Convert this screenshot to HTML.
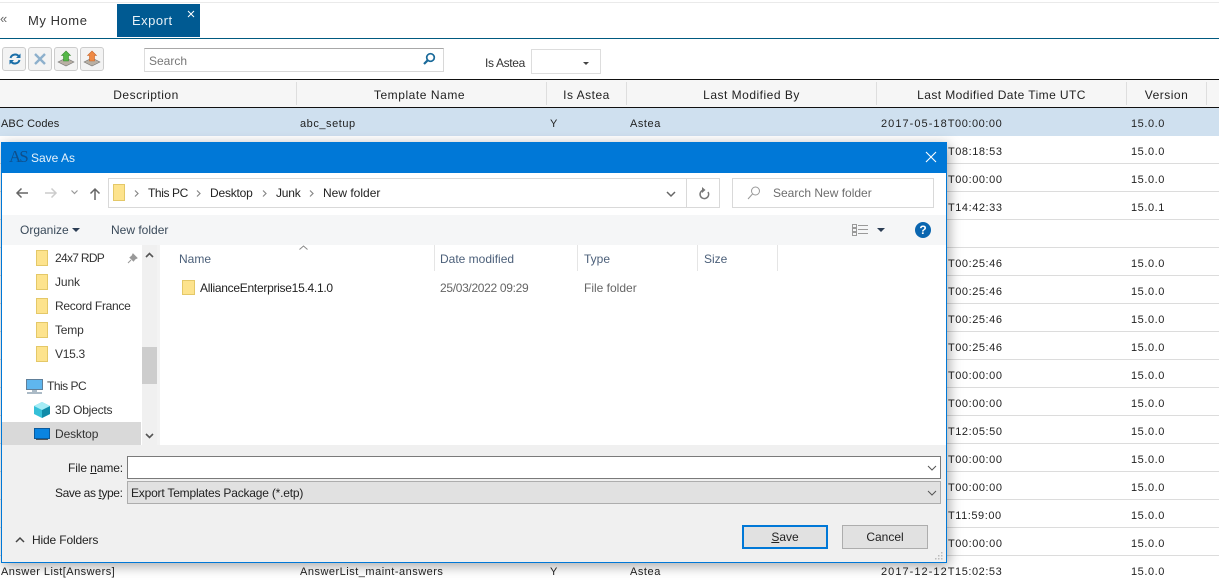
<!DOCTYPE html>
<html><head><meta charset="utf-8"><style>
html,body{margin:0;padding:0;background:#fff}
body{width:1219px;height:574px;position:relative;overflow:hidden;font-family:"Liberation Sans","Noto Sans CJK JP",sans-serif;font-size:12px;color:#222}
.a{position:absolute}
.t{position:absolute;white-space:nowrap;line-height:16px;height:16px}
.g{font-size:11px;letter-spacing:.55px;color:#222}
.w{letter-spacing:1.05px}
.h{font-size:12px;letter-spacing:.5px;color:#222;text-align:center}
.l{position:absolute;left:0;width:1219px;height:1px;background:#dcdcdc}
.v{position:absolute;width:1px;background:#dedede}
.b{position:absolute;top:47px;width:24px;height:24px;border:1px solid #ccc;border-radius:3px;background:#f3f3f3;box-sizing:border-box}
.d{font-size:12px;color:#222}
.n{font-size:12px;color:#333;letter-spacing:-.3px}
svg{position:absolute;overflow:visible}
u{text-decoration:underline}
</style></head><body>
<div class="a" style="left:0;top:2px;width:1219px;height:1px;background:#eaeaea"></div>
<div class="t" style="left:0;top:11px;font-size:13px;color:#666">«</div>
<div class="t" style="left:28px;top:13px;font-size:13px;color:#333;letter-spacing:.55px">My Home</div>
<div class="a" style="left:117px;top:4px;width:83px;height:33px;background:#005a92"></div>
<div class="t" style="left:132px;top:13px;font-size:13px;color:#e8f2f8;letter-spacing:.5px">Export</div>
<svg style="left:187px;top:10px" width="8" height="8"><path d="M1 1L7 7M7 1L1 7" stroke="#fff" stroke-width="1"/></svg>
<div class="a" style="left:0;top:38px;width:1219px;height:1px;background:#005a80"></div>

<div class="b" style="left:2px"></div>
<svg style="left:8px;top:52px" width="14" height="14"><path d="M2.500 6A4.800 4.800 0 0 1 11 4.500M11.500 8A4.800 4.800 0 0 1 3 9.500" fill="none" stroke="#1a6ea8" stroke-width="2"/><path d="M12.500 1.500V6H8zM1.500 12.500V8H6z" fill="#1a6ea8"/></svg>
<div class="b" style="left:28px"></div>
<svg style="left:34px;top:53px" width="12" height="12"><path d="M1 1L11 11M11 1L1 11" stroke="#8db0cc" stroke-width="2.400"/></svg>
<div class="b" style="left:54px"></div>
<svg style="left:58px;top:50px" width="17" height="17"><path d="M0 12L8 8L16 12L8 16Z" fill="#b9b0a4" stroke="#777" stroke-width=".6"/><path d="M8 1L12.500 5.500H10.500V11H5.500V5.500H3.500Z" fill="#55b848" stroke="#3a8a30" stroke-width=".6"/></svg>
<div class="b" style="left:80px"></div>
<svg style="left:84px;top:50px" width="17" height="17"><path d="M0 12L8 8L16 12L8 16Z" fill="#b9b0a4" stroke="#777" stroke-width=".6"/><path d="M8 1L12.500 5.500H10.500V11H5.500V5.500H3.500Z" fill="#ef8a45" stroke="#c9662a" stroke-width=".6"/></svg>

<div class="a" style="left:144px;top:48px;width:300px;height:24px;border:1px solid #d8d8d8;border-top-color:#a8a8a8;border-left-color:#ddd;box-sizing:border-box;background:#fff"></div>
<div class="t" style="left:149px;top:53px;color:#777;font-size:12px;letter-spacing:0">Search</div>
<svg style="left:422px;top:52px" width="15" height="15"><circle cx="8.500" cy="5.500" r="3.800" fill="none" stroke="#1a6a9a" stroke-width="1.700"/><path d="M5.800 8.200L2 12" stroke="#1a6a9a" stroke-width="2.200"/></svg>
<div class="t" style="left:485px;top:55px;color:#333;letter-spacing:-.35px">Is Astea</div>
<div class="a" style="left:531px;top:49px;width:70px;height:25px;border:1px solid #ddd;box-sizing:border-box"></div>
<svg style="left:583px;top:62px" width="7" height="4"><path d="M0 0H6L3 3Z" fill="#444"/></svg>

<div class="a" style="left:0;top:79px;width:1219px;height:29px;background:#f6f6f6;border-top:1px solid #111;border-bottom:1px solid #111;box-sizing:border-box"></div>
<div class="v" style="left:296px;top:82px;height:23px"></div>
<div class="v" style="left:546px;top:82px;height:23px"></div>
<div class="v" style="left:626px;top:82px;height:23px"></div>
<div class="v" style="left:876px;top:82px;height:23px"></div>
<div class="v" style="left:1126px;top:82px;height:23px"></div>
<div class="v" style="left:1206px;top:82px;height:23px"></div>
<div class="t h" style="left:0;top:87px;width:292px">Description</div>
<div class="t h" style="left:295px;top:87px;width:249px;letter-spacing:.55px">Template Name</div>
<div class="t h" style="left:547px;top:87px;width:79px">Is Astea</div>
<div class="t h" style="left:627px;top:87px;width:249px">Last Modified By</div>
<div class="t h" style="left:877px;top:87px;width:249px;letter-spacing:.42px">Last Modified Date Time UTC</div>
<div class="t h" style="left:1127px;top:87px;width:79px">Version</div>

<div class="a" style="left:0;top:108px;width:1219px;height:28px;background:#cfe0ef"></div>
<div class="l" style="top:163px"></div><div class="l" style="top:191px"></div><div class="l" style="top:219px"></div><div class="l" style="top:247px"></div><div class="l" style="top:275px"></div><div class="l" style="top:303px"></div><div class="l" style="top:331px"></div><div class="l" style="top:359px"></div><div class="l" style="top:387px"></div><div class="l" style="top:415px"></div><div class="l" style="top:443px"></div><div class="l" style="top:471px"></div><div class="l" style="top:499px"></div><div class="l" style="top:527px"></div><div class="l" style="top:555px"></div>

<div class="t g" style="left:1px;top:116px;letter-spacing:.1px">ABC Codes</div>
<div class="t g" style="left:300px;top:116px">abc_setup</div>
<div class="t g" style="left:550px;top:116px">Y</div>
<div class="t g" style="left:630px;top:116px">Astea</div>
<div class="t g" style="left:881px;top:116px"><span class="w">2017-05-18</span>T00:00:00</div>
<div class="t g" style="left:1131px;top:116px">15.0.0</div>

<div class="t g" style="left:948px;top:144px">T08:18:53</div><div class="t g" style="left:1131px;top:144px">15.0.0</div>
<div class="t g" style="left:948px;top:172px">T00:00:00</div><div class="t g" style="left:1131px;top:172px">15.0.0</div>
<div class="t g" style="left:948px;top:200px">T14:42:33</div><div class="t g" style="left:1131px;top:200px">15.0.1</div>
<div class="t g" style="left:948px;top:256px">T00:25:46</div><div class="t g" style="left:1131px;top:256px">15.0.0</div>
<div class="t g" style="left:948px;top:284px">T00:25:46</div><div class="t g" style="left:1131px;top:284px">15.0.0</div>
<div class="t g" style="left:948px;top:312px">T00:25:46</div><div class="t g" style="left:1131px;top:312px">15.0.0</div>
<div class="t g" style="left:948px;top:340px">T00:25:46</div><div class="t g" style="left:1131px;top:340px">15.0.0</div>
<div class="t g" style="left:948px;top:368px">T00:00:00</div><div class="t g" style="left:1131px;top:368px">15.0.0</div>
<div class="t g" style="left:948px;top:396px">T00:00:00</div><div class="t g" style="left:1131px;top:396px">15.0.0</div>
<div class="t g" style="left:948px;top:424px">T12:05:50</div><div class="t g" style="left:1131px;top:424px">15.0.0</div>
<div class="t g" style="left:948px;top:452px">T00:00:00</div><div class="t g" style="left:1131px;top:452px">15.0.0</div>
<div class="t g" style="left:948px;top:480px">T00:00:00</div><div class="t g" style="left:1131px;top:480px">15.0.0</div>
<div class="t g" style="left:948px;top:508px">T11:59:00</div><div class="t g" style="left:1131px;top:508px">15.0.0</div>
<div class="t g" style="left:948px;top:536px">T00:00:00</div><div class="t g" style="left:1131px;top:536px">15.0.0</div>
<div class="t g" style="left:1px;top:564px;letter-spacing:.45px">Answer List[Answers]</div>
<div class="t g" style="left:300px;top:564px;letter-spacing:.5px">AnswerList_maint-answers</div>
<div class="t g" style="left:550px;top:564px">Y</div>
<div class="t g" style="left:630px;top:564px">Astea</div>
<div class="t g" style="left:881px;top:564px"><span class="w">2017-12-12</span>T15:02:53</div>
<div class="t g" style="left:1131px;top:564px">15.0.0</div>

<!-- dialog -->
<div class="a" style="left:1px;top:142px;width:946px;height:421px;background:#f0f0f0;border:1px solid #0078d7;box-sizing:border-box;box-shadow:2px 3px 12px rgba(0,0,0,.35)"></div>
<div class="a" style="left:2px;top:143px;width:944px;height:30px;background:#0078d7"></div>
<div class="t" style="left:9px;top:149px;font-family:'Liberation Serif',serif;font-size:17px;color:#0e4f8c;letter-spacing:-2px">AS</div>
<div class="t" style="left:31px;top:150px;color:#e6f2fb;font-size:12px">Save As</div>
<svg style="left:925px;top:151px" width="12" height="12"><path d="M1 1L11 11M11 1L1 11" stroke="#fff" stroke-width="1.100"/></svg>

<div class="a" style="left:2px;top:173px;width:944px;height:42px;background:#fff"></div>
<svg style="left:15px;top:187px" width="14" height="12"><path d="M13 6H2M6.500 1.500L2 6L6.500 10.500" fill="none" stroke="#666" stroke-width="1.500"/></svg>
<svg style="left:44px;top:187px" width="14" height="12"><path d="M1 6H12M7.500 1.500L12 6L7.500 10.500" fill="none" stroke="#ccc" stroke-width="1.500"/></svg>
<svg style="left:71px;top:190px" width="7" height="5"><path d="M.5 .5L3.500 3.500L6.500 .5" fill="none" stroke="#999" stroke-width="1.200"/></svg>
<svg style="left:89px;top:187px" width="12" height="14"><path d="M6 13V2M1.500 6.500L6 2L10.500 6.500" fill="none" stroke="#666" stroke-width="1.500"/></svg>
<div class="a" style="left:108px;top:178px;width:612px;height:30px;border:1px solid #d9d9d9;box-sizing:border-box;background:#fff"></div>
<div class="a" style="left:686px;top:178px;width:1px;height:30px;background:#d9d9d9"></div>
<div class="a" style="left:113px;top:184px;width:12px;height:17px;background:#fde38d;border:1px solid #e4c868;box-sizing:border-box"></div>
<div class="t" style="left:148px;top:185px;letter-spacing:-.4px">This PC</div>
<div class="t" style="left:210px;top:185px;letter-spacing:-.2px">Desktop</div>
<div class="t" style="left:276px;top:185px;letter-spacing:-.2px">Junk</div>
<div class="t" style="left:323px;top:185px">New folder</div>
<svg style="left:134px;top:190px" width="5" height="7"><path d="M1 .5L4 3.500L1 6.500" fill="none" stroke="#888" stroke-width="1.200"/></svg>
<svg style="left:196px;top:190px" width="5" height="7"><path d="M1 .5L4 3.500L1 6.500" fill="none" stroke="#888" stroke-width="1.200"/></svg>
<svg style="left:262px;top:190px" width="5" height="7"><path d="M1 .5L4 3.500L1 6.500" fill="none" stroke="#888" stroke-width="1.200"/></svg>
<svg style="left:309px;top:190px" width="5" height="7"><path d="M1 .5L4 3.500L1 6.500" fill="none" stroke="#888" stroke-width="1.200"/></svg>
<svg style="left:666px;top:191px" width="10" height="6"><path d="M1 1L5 5L9 1" fill="none" stroke="#666" stroke-width="1.500"/></svg>
<svg style="left:698px;top:187px" width="13" height="13"><path d="M6 3A4.300 4.300 0 1 0 10 5" fill="none" stroke="#777" stroke-width="1.500"/><path d="M4 0V6L7.500 3Z" fill="#777"/></svg>
<div class="a" style="left:732px;top:178px;width:202px;height:30px;border:1px solid #d9d9d9;box-sizing:border-box;background:#fff"></div>
<svg style="left:747px;top:186px" width="14" height="14"><circle cx="8.500" cy="5" r="4" fill="none" stroke="#999"/><path d="M5.500 8L1 13" stroke="#999"/></svg>
<div class="t" style="left:773px;top:185px;color:#6d6d6d">Search New folder</div>

<div class="a" style="left:2px;top:215px;width:944px;height:30px;background:#f5f6f7"></div>
<div class="t" style="left:20px;top:222px;color:#3a4a5a">Organize</div>
<svg style="left:72px;top:228px" width="9" height="5"><path d="M0 0H8L4 4Z" fill="#2b3d54"/></svg>
<div class="t" style="left:111px;top:222px;color:#3a4a5a">New folder</div>
<svg style="left:852px;top:224px" width="17" height="12"><path d="M.5 .5H4.500V3.500H.5ZM.5 4.500H4.500V7.500H.5ZM.5 8.500H4.500V11.500H.5ZM6 1.500H16M6 5.500H16M6 9.500H16" fill="none" stroke="#9a9a9a" stroke-width="1"/></svg>
<svg style="left:877px;top:228px" width="9" height="5"><path d="M0 0H8L4 4Z" fill="#2b3d54"/></svg>
<svg style="left:915px;top:222px" width="16" height="16"><circle cx="8" cy="8" r="8" fill="#0a66b0"/></svg>
<div class="t" style="left:915px;top:222px;width:16px;text-align:center;color:#fff;font-weight:bold;font-size:12px">?</div>

<div class="a" style="left:2px;top:245px;width:944px;height:200px;background:#fff"></div>
<div class="a" style="left:142px;top:245px;width:15px;height:200px;background:#f0f0f0"></div>
<div class="a" style="left:142px;top:347px;width:15px;height:37px;background:#cdcdcd"></div>
<div class="a" style="left:157px;top:245px;width:3px;height:200px;background:#f3f3f3"></div>
<svg style="left:145px;top:252px" width="9" height="6"><path d="M1 5L4.500 1.500L8 5" fill="none" stroke="#555" stroke-width="1.600"/></svg>
<svg style="left:145px;top:433px" width="9" height="6"><path d="M1 1L4.500 4.500L8 1" fill="none" stroke="#555" stroke-width="1.600"/></svg>
<div class="a" style="left:2px;top:422px;width:139px;height:23px;background:#d9d9d9"></div>

<div class="a" style="left:36px;top:250px;width:12px;height:16px;background:#fde38d;border:1px solid #e4c868;box-sizing:border-box"></div>
<div class="a" style="left:36px;top:274px;width:12px;height:16px;background:#fde38d;border:1px solid #e4c868;box-sizing:border-box"></div>
<div class="a" style="left:36px;top:298px;width:12px;height:16px;background:#fde38d;border:1px solid #e4c868;box-sizing:border-box"></div>
<div class="a" style="left:36px;top:322px;width:12px;height:16px;background:#fde38d;border:1px solid #e4c868;box-sizing:border-box"></div>
<div class="a" style="left:36px;top:346px;width:12px;height:16px;background:#fde38d;border:1px solid #e4c868;box-sizing:border-box"></div>
<div class="t n" style="left:55px;top:250px;letter-spacing:-.7px">24x7 RDP</div>
<div class="t n" style="left:55px;top:274px;letter-spacing:-.1px">Junk</div>
<div class="t n" style="left:55px;top:298px">Record France</div>
<div class="t n" style="left:55px;top:322px;letter-spacing:-.2px">Temp</div>
<div class="t n" style="left:55px;top:346px;letter-spacing:-.3px">V15.3</div>
<svg style="left:127px;top:253px" width="11" height="11"><path d="M6 1L10 5L8 6L6.500 8L3 4.500L5 3ZM4 7L1 10" fill="#999" stroke="#999"/></svg>
<svg style="left:26px;top:379px" width="17" height="15"><rect x=".5" y=".5" width="16" height="10" fill="#5fb6ee" stroke="#607f99"/><path d="M6 12H11M1 14H16" stroke="#8fa3b3" stroke-width="1.500"/></svg>
<div class="t n" style="left:47px;top:378px;letter-spacing:-.5px">This PC</div>
<svg style="left:34px;top:402px" width="16" height="16"><path d="M8 0L16 4V12L8 16L0 12V4Z" fill="#35c0d8"/><path d="M8 8L16 4V12L8 16Z" fill="#0f8ba8"/><path d="M8 0L16 4L8 8L0 4Z" fill="#a5ecf5"/></svg>
<div class="t n" style="left:55px;top:402px;letter-spacing:-.2px">3D Objects</div>
<svg style="left:34px;top:428px" width="16" height="12"><rect x=".5" y=".5" width="15" height="10" fill="#0a84e0" stroke="#0a5a9c"/><path d="M2 11.500H14" stroke="#555"/></svg>
<div class="t n" style="left:55px;top:426px;letter-spacing:-.1px">Desktop</div>

<svg style="left:299px;top:245px" width="9" height="5"><path d="M.5 4.500L4.500 1L8.500 4.500" fill="none" stroke="#888"/></svg>
<div class="t" style="left:179px;top:251px;color:#4c607a">Name</div>
<div class="t" style="left:440px;top:251px;color:#4c607a">Date modified</div>
<div class="t" style="left:584px;top:251px;color:#4c607a">Type</div>
<div class="t" style="left:704px;top:251px;color:#4c607a">Size</div>
<div class="v" style="left:434px;top:245px;height:26px;background:#e5e5e5"></div>
<div class="v" style="left:577px;top:245px;height:26px;background:#e5e5e5"></div>
<div class="v" style="left:697px;top:245px;height:26px;background:#e5e5e5"></div>
<div class="v" style="left:777px;top:245px;height:26px;background:#e5e5e5"></div>
<div class="a" style="left:182px;top:280px;width:13px;height:15px;background:#fde38d;border:1px solid #e4c868;box-sizing:border-box"></div>
<div class="t" style="left:200px;top:280px;color:#222;letter-spacing:-.28px">AllianceEnterprise15.4.1.0</div>
<div class="t" style="left:440px;top:280px;color:#666;letter-spacing:-.32px">25/03/2022 09:29</div>
<div class="t" style="left:584px;top:280px;color:#666">File folder</div>

<div class="t d" style="left:68px;top:460px;letter-spacing:-.1px"><span>File <u>n</u>ame:</span></div>
<div class="t d" style="left:55px;top:485px;letter-spacing:-.4px">Save as <u>t</u>ype:</div>
<div class="a" style="left:127px;top:456px;width:814px;height:23px;background:#fff;border:1px solid #7a7a7a;box-sizing:border-box"></div>
<svg style="left:927px;top:465px" width="10" height="6"><path d="M1 1L5 5L9 1" fill="none" stroke="#555"/></svg>
<div class="a" style="left:127px;top:481px;width:814px;height:23px;background:#e1e1e1;border:1px solid #adadad;box-sizing:border-box"></div>
<div class="t d" style="left:131px;top:485px;letter-spacing:-.2px">Export Templates Package (*.etp)</div>
<svg style="left:927px;top:490px" width="10" height="6"><path d="M1 1L5 5L9 1" fill="none" stroke="#555"/></svg>
<svg style="left:15px;top:537px" width="10" height="6"><path d="M1 5L5 1L9 5" fill="none" stroke="#444" stroke-width="1.500"/></svg>
<div class="t d" style="left:32px;top:532px;letter-spacing:-.15px">Hide Folders</div>
<div class="a" style="left:742px;top:525px;width:86px;height:24px;background:#e1e1e1;border:2px solid #0078d7;box-sizing:border-box"></div>
<div class="t d" style="left:742px;top:529px;width:86px;text-align:center"><u>S</u>ave</div>
<div class="a" style="left:842px;top:525px;width:86px;height:24px;background:#e1e1e1;border:1px solid #adadad;box-sizing:border-box"></div>
<div class="t d" style="left:842px;top:529px;width:86px;text-align:center">Cancel</div>
<svg style="left:934px;top:551px" width="10" height="10"><path d="M7 1h1.500v1.500H7zM4 4h1.500v1.500H4zM7 4h1.500v1.500H7zM1 7h1.500v1.500H1zM4 7h1.500v1.500H4zM7 7h1.500v1.500H7z" fill="#bbb"/></svg>
</body></html>
